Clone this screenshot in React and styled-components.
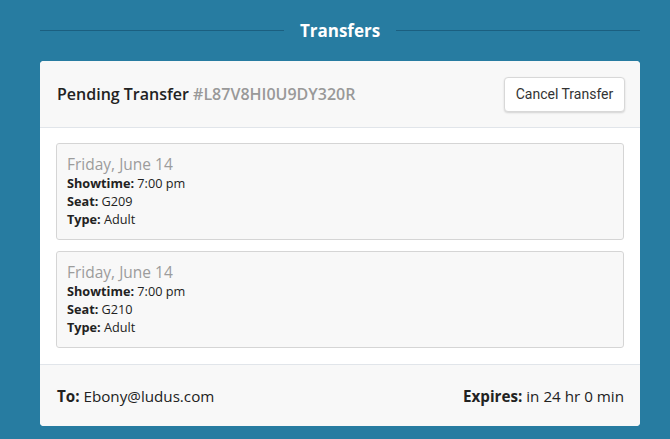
import React from "react";
import styled, { createGlobalStyle } from "styled-components";

const GlobalStyle = createGlobalStyle`
  html, body {
    margin: 0;
    padding: 0;
    background-color: #277ca1;
    font-family: "Open Sans", "Noto Sans", sans-serif;
  }
`;

const Page = styled.div`
  width: 670px;
  height: 439px;
  box-sizing: border-box;
  padding: 0 30px 0 40px;
  overflow: hidden;
`;

const TitleRow = styled.div`
  height: 60px;
  display: flex;
  align-items: center;
  gap: 16px;
  margin-bottom: 1px;
`;

const Rule = styled.div`
  flex: 1;
  height: 1px;
  background-color: #1b5f80;
`;

const Title = styled.h2`
  margin: 0;
  color: white;
  font-size: 17px;
  font-weight: 700;
`;

const Card = styled.div`
  width: 600px;
  background-color: white;
  border-radius: 4px;
  overflow: hidden;
`;

const CardHeader = styled.div`
  height: 67px;
  box-sizing: border-box;
  padding: 0 15px 0 17px;
  display: flex;
  align-items: center;
  justify-content: space-between;
  background-color: #f8f8f8;
  border-bottom: 1px solid #e1e5ea;
  font-size: 16px;
  font-weight: 600;
  color: #222;
`;

const Code = styled.span`
  color: #999;
`;

const CancelButton = styled.button`
  height: 35px;
  width: 121px;
  background-color: white;
  border: 1px solid #d8d8d8;
  border-radius: 4px;
  box-shadow: 0 1px 2px rgba(0, 0, 0, 0.15);
  font-family: "Roboto", "Liberation Sans", sans-serif;
  font-size: 14px;
  color: #333;
  padding: 0;
`;

const CardBody = styled.div`
  padding: 15px 16px 16px;
  display: flex;
  flex-direction: column;
  gap: 11px;
`;

const Ticket = styled.div`
  height: 97px;
  box-sizing: border-box;
  padding: 10px 10px;
  background-color: #f8f8f8;
  border: 1px solid #d5d5d5;
  border-radius: 3px;
`;

const TicketDate = styled.div`
  font-size: 15.5px;
  line-height: 20px;
  color: #9c9c9c;
`;

const TicketLine = styled.div`
  font-size: 12.7px;
  line-height: 18px;
  color: #222;

  b {
    font-weight: 700;
  }
`;

const CardFooter = styled.div`
  height: 62px;
  box-sizing: border-box;
  padding: 0 16px 0 17px;
  display: flex;
  align-items: center;
  justify-content: space-between;
  background-color: #f8f8f8;
  border-top: 1px solid #e1e5ea;
  font-size: 15.2px;
  color: #222;

  b {
    font-weight: 700;
  }
`;

const tickets = [
  { date: "Friday, June 14", showtime: "7:00 pm", seat: "G209", type: "Adult" },
  { date: "Friday, June 14", showtime: "7:00 pm", seat: "G210", type: "Adult" },
];

export default function App() {
  return (
    <>
      <GlobalStyle />
      <Page>
        <TitleRow>
          <Rule />
          <Title>Transfers</Title>
          <Rule />
        </TitleRow>
        <Card>
          <CardHeader>
            <span>
              Pending Transfer <Code>#L87V8HI0U9DY320R</Code>
            </span>
            <CancelButton>Cancel Transfer</CancelButton>
          </CardHeader>
          <CardBody>
            {tickets.map((t) => (
              <Ticket key={t.seat}>
                <TicketDate>{t.date}</TicketDate>
                <TicketLine>
                  <b>Showtime:</b> {t.showtime}
                </TicketLine>
                <TicketLine>
                  <b>Seat:</b> {t.seat}
                </TicketLine>
                <TicketLine>
                  <b>Type:</b> {t.type}
                </TicketLine>
              </Ticket>
            ))}
          </CardBody>
          <CardFooter>
            <span>
              <b>To:</b> Ebony@ludus.com
            </span>
            <span>
              <b>Expires:</b> in 24 hr 0 min
            </span>
          </CardFooter>
        </Card>
      </Page>
    </>
  );
}
